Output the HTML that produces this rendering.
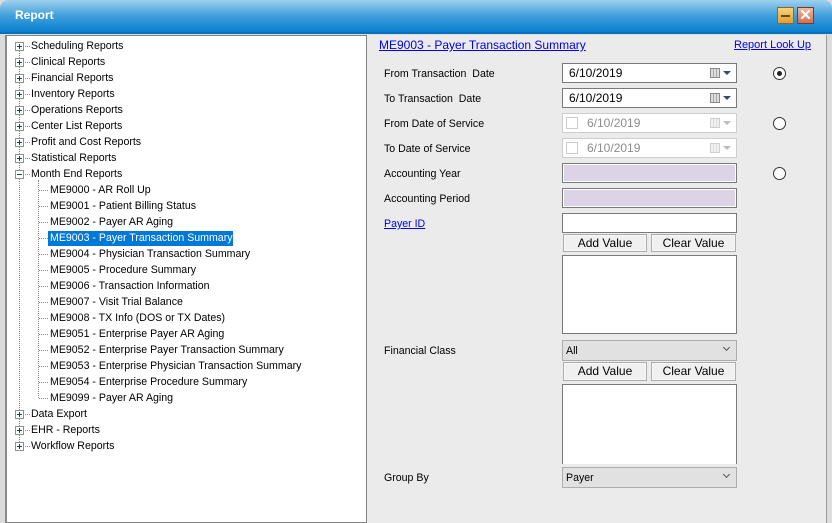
<!DOCTYPE html>
<html><head><style>
*{margin:0;padding:0;box-sizing:border-box}
body{width:832px;height:523px;overflow:hidden;background:#dcdcdc;font-family:"Liberation Sans",sans-serif;font-size:10.6px;color:#000;position:relative}
.a{position:absolute;white-space:nowrap}
#title{left:0;top:0;width:832px;height:34px;border-radius:8px 8px 0 0;background:linear-gradient(#9fd0ee,#3f9fdc 50%,#0a7fcf);border-bottom:2px solid #0870b8}
#left{left:5px;top:35px;width:362px;height:488px;background:#fff;border:1px solid #828282;border-left:2px solid #8a8a8a}
#right{left:367px;top:35px;width:460px;height:488px;background:#ebebeb;border-right:1px solid #9a9a9a}
.ex{position:absolute;width:9px;height:9px;border:1px solid #919191;background:#fff}
.ex:before{content:"";position:absolute;left:1px;top:3px;width:5px;height:1px;background:#1a3a8a}
.ex.p:after{content:"";position:absolute;left:3px;top:1px;width:1px;height:5px;background:#1a3a8a}
.dl{position:absolute;border-top:1px dotted #888;height:0}
.dv{position:absolute;border-left:1px dotted #888;width:0}
.box{position:absolute;background:#fff;border:1px solid #7a7a7a}
.dis{background:#f0f0f0;border-color:#cdcdcd;color:#8d8d8d}
.pur{background:#dcd3e6;border:1px solid #7a7a7a;box-shadow:inset 0 0 0 1px #fff}
.btn{position:absolute;background:#f0f0f0;border:1px solid #adadad;box-shadow:inset 0 0 0 1px #f7f7f7;text-align:center;line-height:16px;font-size:12px}
.radio{position:absolute;width:13px;height:13px;border-radius:50%;border:1px solid #333;background:#fff}
.cal{position:absolute;width:10px;height:10px;border:1px solid #8a8a8a;background:repeating-linear-gradient(90deg,#ddd 0 2px,#aaa 2px 3px)}
.arr{position:absolute;width:0;height:0;border-left:4px solid transparent;border-right:4px solid transparent;border-top:4px solid #3b4a6b}
.combo{position:absolute;background:#e1e1e1;border:1px solid #adadad}
.chev{position:absolute;width:6px;height:6px;border-right:1px solid #555;border-bottom:1px solid #555;transform:rotate(45deg)}
a{color:#0000ee;text-decoration:underline}
</style></head><body>
<div class="a" id="title"></div>
<div class="a" style="left:15px;top:8px;color:#fff;font-weight:bold;font-size:12px">Report</div>
<div class="a" style="left:777px;top:7px;width:17px;height:17px;background:linear-gradient(#f8d27a,#e0a030);border:1px solid #8a6a2a"><div style="position:absolute;left:3px;top:7px;width:9px;height:2px;background:#fff;border:1px solid #6a4a10"></div></div>
<div class="a" style="left:797px;top:7px;width:17px;height:17px;background:linear-gradient(#f0b8a0,#d07050);border:1px solid #7a3a2a;color:#fff;font-weight:bold;font-size:15px;line-height:15px;text-align:center">✕</div>

<div class="a" id="left"></div>
<div class="a" id="right"></div>

<div class="dv" style="left:19px;top:50px;height:396px"></div>
<div class="dv" style="left:38px;top:180px;height:218px"></div>

<div id="tree"></div>
<script>
var tops=["Scheduling Reports","Clinical Reports","Financial Reports","Inventory Reports","Operations Reports","Center List Reports","Profit and Cost Reports","Statistical Reports","Month End Reports"];
var kids=["ME9000 - AR Roll Up","ME9001 - Patient Billing Status","ME9002 - Payer AR Aging","ME9003 - Payer Transaction Summary","ME9004 - Physician Transaction Summary","ME9005 - Procedure Summary","ME9006 - Transaction Information","ME9007 - Visit Trial Balance","ME9008 - TX Info (DOS or TX Dates)","ME9051 - Enterprise Payer AR Aging","ME9052 - Enterprise Payer Transaction Summary","ME9053 - Enterprise Physician Transaction Summary","ME9054 - Enterprise Procedure Summary","ME9099 - Payer AR Aging"];
var bots=["Data Export","EHR - Reports","Workflow Reports"];
var h="";
function tt(y,txt,minus){h+='<div class="ex'+(minus?'':' p')+'" style="left:15px;top:'+(y-4)+'px"></div><div class="dl" style="left:25px;top:'+y+'px;width:5px"></div><div class="a" style="left:31px;top:'+(y-6)+'px">'+txt+'</div>';}
tops.forEach(function(s,i){tt(46+16*i,s,i==8)});
kids.forEach(function(s,i){var y=190+16*i;h+='<div class="dl" style="left:39px;top:'+y+'px;width:9px"></div>';
if(i==3)h+='<div class="a" style="left:48px;top:'+(y-7)+'px;width:185px;height:15px;background:#0078d7"></div><div class="a" style="left:50px;top:'+(y-6)+'px;color:#fff">'+s+'</div>';
else h+='<div class="a" style="left:50px;top:'+(y-6)+'px">'+s+'</div>';});
bots.forEach(function(s,i){tt(414+16*i,s,false)});
document.getElementById("tree").innerHTML=h;
</script>

<div class="a" style="left:379px;top:38px;font-size:12px"><a>ME9003 - Payer Transaction Summary</a></div>
<div class="a" style="left:734px;top:39px;font-size:11px"><a>Report Look Up</a></div>

<div class="a" style="left:384px;top:68px">From Transaction&nbsp; Date</div>
<div class="a" style="left:384px;top:93px">To Transaction&nbsp; Date</div>
<div class="a" style="left:384px;top:118px">From Date of Service</div>
<div class="a" style="left:384px;top:143px">To Date of Service</div>
<div class="a" style="left:384px;top:168px">Accounting Year</div>
<div class="a" style="left:384px;top:193px">Accounting Period</div>
<div class="a" style="left:384px;top:218px"><a>Payer ID</a></div>
<div class="a" style="left:384px;top:345px">Financial Class</div>
<div class="a" style="left:384px;top:472px">Group By</div>

<div class="box" style="left:562px;top:63px;width:175px;height:20px"></div>
<div class="a" style="left:569px;top:66px;font-size:12px">6/10/2019</div>
<div class="cal" style="left:710px;top:68px"></div><div class="arr" style="left:723px;top:71px"></div>
<div class="box" style="left:562px;top:88px;width:175px;height:20px"></div>
<div class="a" style="left:569px;top:91px;font-size:12px">6/10/2019</div>
<div class="cal" style="left:710px;top:93px"></div><div class="arr" style="left:723px;top:96px"></div>

<div class="box dis" style="left:562px;top:113px;width:175px;height:20px;background:#fff"></div>
<div class="a" style="left:566px;top:117px;width:12px;height:12px;border:1px solid #ccc;background:#fff"></div>
<div class="a" style="left:587px;top:116px;color:#8d8d8d;font-size:12px">6/10/2019</div>
<div class="cal" style="left:710px;top:118px;opacity:.4"></div><div class="arr" style="left:723px;top:121px;border-top-color:#bbb"></div>
<div class="box dis" style="left:562px;top:138px;width:175px;height:20px;background:#fff"></div>
<div class="a" style="left:566px;top:142px;width:12px;height:12px;border:1px solid #ccc;background:#fff"></div>
<div class="a" style="left:587px;top:141px;color:#8d8d8d;font-size:12px">6/10/2019</div>
<div class="cal" style="left:710px;top:143px;opacity:.4"></div><div class="arr" style="left:723px;top:146px;border-top-color:#bbb"></div>

<div class="box pur" style="left:562px;top:163px;width:175px;height:20px"></div>
<div class="box pur" style="left:562px;top:188px;width:175px;height:20px"></div>
<div class="box" style="left:562px;top:213px;width:175px;height:20px"></div>
<div class="btn" style="left:563px;top:234px;width:84px;height:18px">Add Value</div>
<div class="btn" style="left:651px;top:234px;width:85px;height:18px">Clear Value</div>
<div class="box" style="left:562px;top:255px;width:175px;height:79px"></div>

<div class="combo" style="left:562px;top:340px;width:175px;height:21px"></div>
<div class="a" style="left:566px;top:345px">All</div>
<div class="chev" style="left:724px;top:345px;width:5px;height:5px"></div>
<div class="btn" style="left:563px;top:362px;width:84px;height:19px">Add Value</div>
<div class="btn" style="left:651px;top:362px;width:85px;height:19px">Clear Value</div>
<div class="box" style="left:562px;top:384px;width:175px;height:80px;border-bottom:none"></div>

<div class="combo" style="left:562px;top:467px;width:175px;height:21px"></div>
<div class="a" style="left:566px;top:472px">Payer</div>
<div class="chev" style="left:724px;top:472px;width:5px;height:5px"></div>

<div class="radio" style="left:773px;top:67px"><div style="position:absolute;left:3px;top:3px;width:5px;height:5px;border-radius:50%;background:#222"></div></div>
<div class="radio" style="left:773px;top:117px"></div>
<div class="radio" style="left:773px;top:167px"></div>
</body></html>
